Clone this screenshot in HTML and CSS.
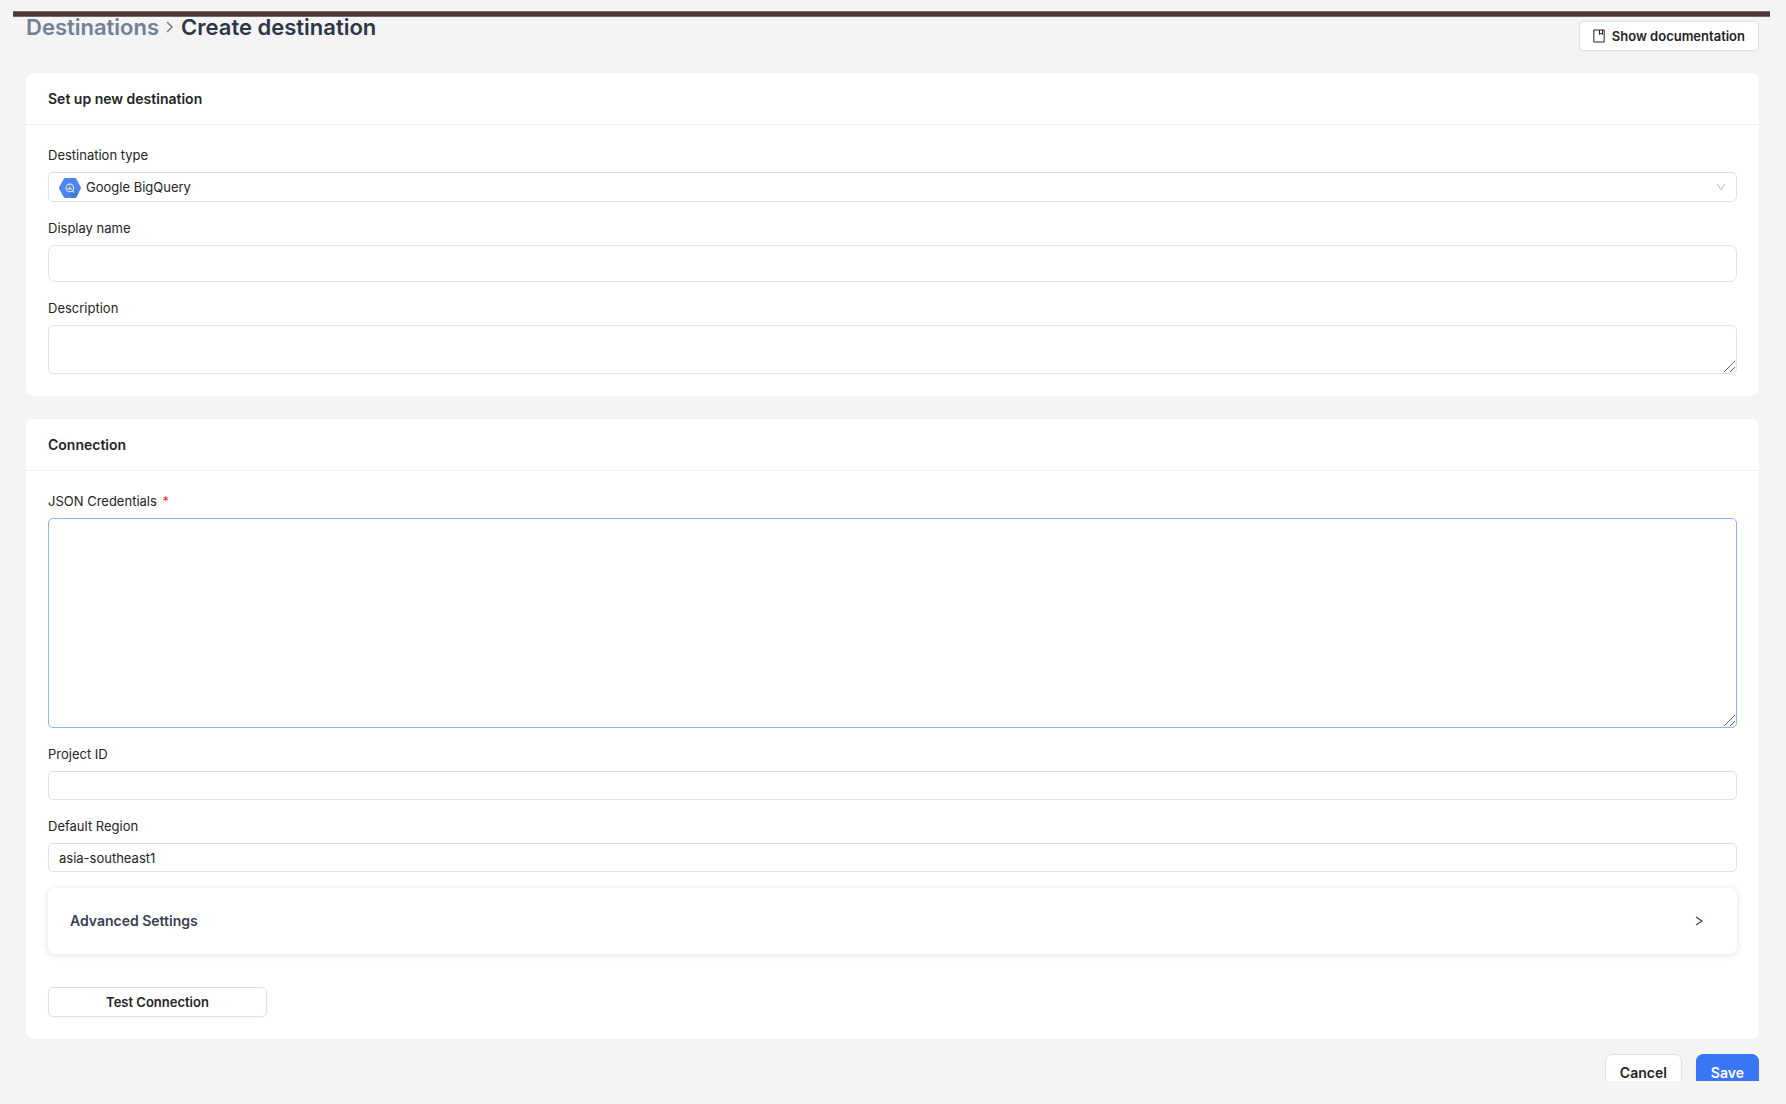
FILE: index.html
```html
<!DOCTYPE html>
<html lang="en">
<head>
  <meta charset="UTF-8">
  <title>Create destination</title>
  <link rel="stylesheet" href="styles.css">
</head>
<body>
  <div class="top-bar"></div>
  <div class="page">
    <header class="page-header">
      <h1 class="breadcrumb">
        <a href="#">Destinations</a>
        <svg class="separator" width="8" height="12" viewBox="0 0 8 12" fill="none" stroke="currentColor" stroke-width="1.6"><path d="M1 1l5 5-5 5"/></svg>
        <span>Create destination</span>
      </h1>
      <button class="button docs-button" type="button">
        <svg width="12" height="14" viewBox="0 0 12 14" fill="none" stroke="currentColor"><path d="M.8 1h10.400v12H.8z M6.500 1v4.500l1.500-1.200 1.500 1.200V1"/></svg>
        Show documentation
      </button>
    </header>

    <form class="destination-form">
      <section class="card">
        <h2 class="card-title">Set up new destination</h2>
        <div class="card-body">
          <div class="field">
            <label for="type">Destination type</label>
            <div class="select-wrap">
              <svg class="type-icon" width="22" height="20" viewBox="0 0 22 20">
                <path fill="#4f83ee" d="M6.200 0h9.600q.9 0 1.400.8l4.500 8.200q.5 1 0 2l-4.500 8.200q-.5.8-1.400.8H6.200q-.9 0-1.400-.8L.3 11q-.5-1 0-2L4.800.8Q5.300 0 6.200 0z"/>
                <path fill="#4677dc" d="M14 8l5.500 7-2.300 4.200q-.5.8-1.400.8H13l-4-6z"/>
                <circle cx="10.800" cy="10" r="3.800" fill="#4f83ee" stroke="#dce8ff" stroke-width="1.200"/>
                <path stroke="#dce8ff" stroke-width="1.200" d="M9.300 10v1.800M10.900 8.500v3.600M12.400 10.300v1.300M13.500 12.800l1.700 1.700"/>
              </svg>
              <select id="type">
                <option>Google BigQuery</option>
              </select>
              <svg class="arrow" width="10" height="8" viewBox="0 0 10 8" fill="none" stroke="currentColor"><path d="M1 1l4 5.500L9 1"/></svg>
            </div>
          </div>
          <div class="field">
            <label for="name">Display name</label>
            <input class="input-large" type="text" id="name">
          </div>
          <div class="field">
            <label for="description">Description</label>
            <textarea class="description" id="description"></textarea>
          </div>
        </div>
      </section>

      <section class="card">
        <h2 class="card-title">Connection</h2>
        <div class="card-body">
          <div class="field">
            <label for="credentials">JSON Credentials <span class="required">*</span></label>
            <textarea class="credentials" id="credentials" required></textarea>
          </div>
          <div class="field">
            <label for="project">Project ID</label>
            <input type="text" id="project">
          </div>
          <div class="field">
            <label for="region">Default Region</label>
            <input type="text" id="region" value="asia-southeast1">
          </div>
          <button class="advanced" type="button">
            Advanced Settings
            <svg width="8" height="10" viewBox="0 0 8 10" fill="none" stroke="currentColor" stroke-width="1.200"><path d="M1 1l6 4-6 4"/></svg>
          </button>
          <button class="button test-button" type="button">Test Connection</button>
        </div>
      </section>

      <footer class="actions">
        <button class="button action" type="button">Cancel</button>
        <button class="button action save" type="button">Save</button>
      </footer>
    </form>
  </div>
</body>
</html>
```
FILE: styles.css
```css
* {
  box-sizing: border-box;
}
body {
  margin: 0;
  padding-top: 11px;
  background: #f4f4f4;
  color: #242424;
  font-family: Inter, "Liberation Sans", sans-serif;
  font-size: 13px;
  line-height: 20px;
}
input,
textarea,
select,
button {
  font: inherit;
  color: inherit;
}
.top-bar {
  height: 6px;
  margin: 0 16px 0 13px;
  background: #503838;
  border: 1px solid #786868;
  border-width: 1px 0;
}
.page {
  padding: 0 27px 0 26px;
}

/* Header */
.page-header {
  display: flex;
  justify-content: space-between;
  align-items: flex-start;
  height: 56px;
}
.breadcrumb {
  display: flex;
  align-items: center;
  gap: 7px;
  margin: 0;
  font-size: 22px;
  font-weight: 600;
  line-height: 20px;
  color: #2d3748;
}
.breadcrumb a {
  color: #718096;
  text-decoration: none;
}
.separator {
  color: #718096;
}
.button {
  height: 30px;
  background: #fff;
  border: 1px solid #e2e2e2;
  border-radius: 5px;
  box-shadow: 0 1px 2px rgba(0, 0, 0, 0.04);
  font-weight: 600;
  cursor: pointer;
}
.docs-button {
  display: flex;
  align-items: center;
  gap: 7px;
  margin-top: 4px;
  padding: 0 13px;
}

/* Cards */
.card {
  margin-bottom: 23px;
  background: #fff;
  border-radius: 7px;
  box-shadow: 0 0 2px rgba(0, 0, 0, 0.04);
}
.card-title {
  margin: 0;
  padding: 16px 22px 15px;
  border-bottom: 1px solid #f0f0f0;
  font-size: 14px;
  font-weight: 600;
  line-height: 20px;
}
.card-body {
  padding: 20px 22px 22px;
}

/* Fields */
.field {
  display: flex;
  flex-direction: column;
  gap: 7px;
  margin-bottom: 16px;
}
.field:last-child {
  margin-bottom: 0;
}
.field input,
.field textarea,
.field select {
  width: 100%;
  height: 29px;
  padding: 0 10px;
  background: #fff;
  border: 1px solid #e2e2e2;
  border-radius: 5px;
  outline: none;
}
.field .input-large {
  height: 37px;
  border-radius: 7px;
}
.field .description {
  height: 49px;
}
.field .credentials {
  height: 210px;
  border-color: #85b5fa;
}
textarea::-webkit-resizer {
  background: linear-gradient(135deg, transparent 46%, #666 47%, #666 52%, transparent 53%, transparent 75%, #666 76%, #666 81%, transparent 82%) 3px 3px / 11px 11px no-repeat;
}
.required {
  margin-left: 2px;
  color: #d9363e;
}
.select-wrap {
  position: relative;
}
.field select {
  display: block;
  height: 30px;
  padding: 0 37px;
  appearance: none;
}
.type-icon {
  position: absolute;
  left: 11px;
  top: 6px;
}
.arrow {
  position: absolute;
  right: 11px;
  top: 11px;
  color: #b8b8b8;
}

/* Advanced settings */
.advanced {
  display: flex;
  justify-content: space-between;
  align-items: center;
  width: 100%;
  height: 66px;
  margin-bottom: 33px;
  padding: 0 34px 0 22px;
  background: #fff;
  border: none;
  border-radius: 7px;
  box-shadow: 0 1px 7px rgba(0, 0, 0, 0.13);
  color: #374151;
  font-size: 14px;
  font-weight: 600;
  cursor: pointer;
}
.test-button {
  display: block;
  width: 219px;
}

.actions {
  display: flex;
  justify-content: flex-end;
  gap: 14px;
  height: 27px;
  margin-top: -8px;
  overflow: hidden;
}
.action {
  height: 37px;
  padding: 0 14px;
  border-radius: 7px;
  font-size: 14px;
}
.save {
  background: #3b76f6;
  border-color: #3b76f6;
  color: #fff;
}
```
